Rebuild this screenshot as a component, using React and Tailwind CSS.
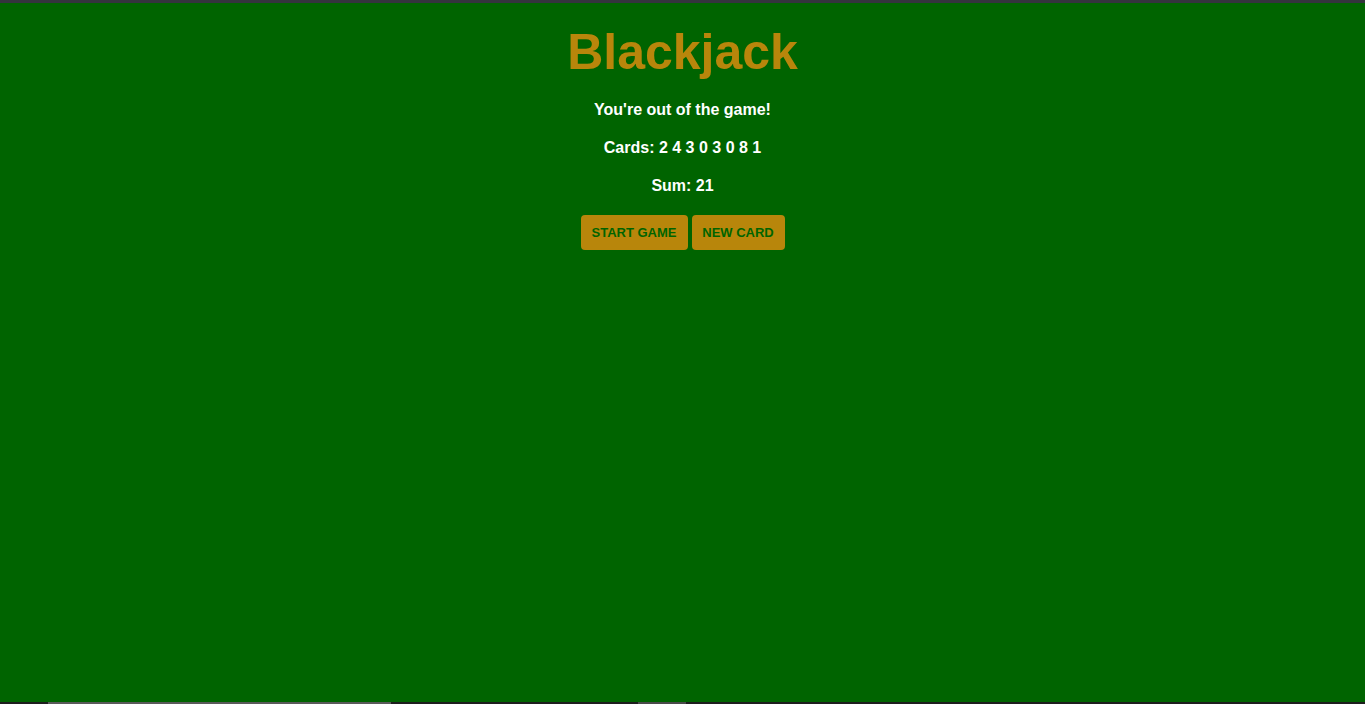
import React, { useState } from 'react';

const GOLD = 'bg-[#b8860b]';

export default function App() {
  const [cards] = useState([2, 4, 3, 0, 3, 0, 8, 1]);
  const sum = cards.reduce((a, b) => a + b, 0);

  return (
    <div className="flex h-[704px] flex-col overflow-hidden font-['Liberation_Sans',Arial,sans-serif]">
      {/* window chrome strip */}
      <div className="h-[3px] shrink-0 bg-[#34343e]" />

      <main className="flex flex-1 flex-col items-center bg-[#006400] pt-[22px] text-white">
        <h1 className="text-[50px] font-bold leading-[55px] text-[#b8860b]">Blackjack</h1>
        <p className="mt-[21px] text-base font-bold leading-[18px]">You're out of the game!</p>
        <p className="mt-5 text-base font-bold leading-[18px]">Cards: {cards.join(' ')}</p>
        <p className="mt-5 text-base font-bold leading-[18px]">Sum: {sum}</p>
        <div className="mt-5 flex gap-1">
          <button className={`${GOLD} h-[35px] w-[107px] rounded-[4px] text-[13px] font-bold text-[#006400] uppercase`}>
            Start Game
          </button>
          <button className={`${GOLD} h-[35px] w-[93px] rounded-[4px] text-[13px] font-bold text-[#006400] uppercase`}>
            New Card
          </button>
        </div>
      </main>

      {/* bottom scroll strip */}
      <div className="relative h-[2px] shrink-0 bg-[#1e1e1e]">
        <div className="absolute left-[48px] top-0 h-[2px] w-[343px] bg-[#5a5a5a]" />
        <div className="absolute left-[638px] top-0 h-[2px] w-[48px] bg-[#4a4a4a]" />
      </div>
    </div>
  );
}
